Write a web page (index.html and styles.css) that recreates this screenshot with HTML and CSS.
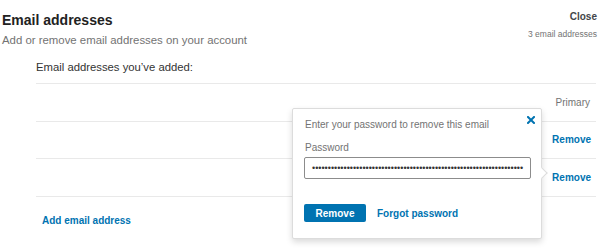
FILE: index.html
```html
<!DOCTYPE html>
<html>
<head>
<meta charset="utf-8">
<link rel="stylesheet" href="styles.css">
</head>
<body>
<section class="panel">
  <header class="head">
    <div class="titles">
      <h2 class="title">Email addresses</h2>
      <p class="subtitle">Add or remove email addresses on your account</p>
    </div>
    <div class="meta">
      <a class="close-link">Close</a>
      <span class="count">3 email addresses</span>
    </div>
  </header>
  <div class="content">
    <p class="label">Email addresses you’ve added:</p>
    <ul class="list">
      <li class="row"><span class="primary">Primary</span></li>
      <li class="row"><a class="remove">Remove</a></li>
      <li class="row"><a class="remove">Remove</a></li>
    </ul>
    <div class="add-wrap"><a class="add">Add email address</a></div>
  </div>

  <div class="popover">
    <button class="popover-close" aria-label="Close">
      <svg width="8" height="8" viewBox="0 0 8 8"><path d="M1 1L7 7M7 1L1 7" stroke="#0073b1" stroke-width="2" stroke-linecap="square"/></svg>
    </button>
    <p class="pop-text">Enter your password to remove this email</p>
    <label class="pop-label">Password</label>
    <div class="pw-field"><span class="dots">•••••••••••••••••••••••••••••••••••••••••••••••••••••••••••••••••••</span></div>
    <div class="pop-actions">
      <button class="btn-primary">Remove</button>
      <a class="forgot">Forgot password</a>
    </div>
    <span class="pointer"></span>
  </div>
</section>
</body>
</html>
```

FILE: styles.css
```css
* { box-sizing: border-box; }
html, body { margin: 0; padding: 0; background: #fff; }
body {
  font-family: "Liberation Sans", Arial, sans-serif;
  color: #333;
  width: 600px;
  height: 250px;
  overflow: hidden;
}
.panel {
  position: relative;
  padding: 11px 3px 0 2px;
  border-bottom: 1px solid #e9e9e9;
}
.head {
  display: flex;
  justify-content: space-between;
  align-items: flex-start;
}
.title {
  margin: 0;
  font-size: 14px;
  line-height: 18px;
  font-weight: bold;
  color: #222;
}
.subtitle {
  margin: 3px 0 0;
  font-size: 11.4px;
  line-height: 16px;
  color: #737373;
}
.meta {
  display: flex;
  flex-direction: column;
  align-items: flex-end;
}
.close-link {
  font-size: 10px;
  line-height: 12px;
  font-weight: bold;
  color: #434649;
}
.count {
  margin-top: 5px;
  font-size: 8.5px;
  line-height: 12px;
  color: #737373;
}
.content {
  margin-left: 34px;
  margin-right: 1px;
}
.label {
  margin: 11px 0 8px;
  font-size: 11.3px;
  line-height: 16px;
  color: #333;
}
.list {
  list-style: none;
  margin: 0;
  padding: 0;
  border-bottom: 1px solid #e9e9e9;
}
.row {
  height: 37.67px;
  border-top: 1px solid #e9e9e9;
  display: flex;
  align-items: center;
  justify-content: flex-end;
  padding-right: 5px;
}
.primary {
  font-size: 10px;
  color: #737373;
  margin-right: 1px;
}
.remove, .add, .forgot {
  font-size: 10px;
  font-weight: bold;
  color: #0073b1;
}
.add-wrap {
  padding: 14px 0 21px 6px;
  line-height: 16px;
}
.popover {
  position: absolute;
  left: 292px;
  top: 108px;
  width: 250px;
  height: 131px;
  background: #fff;
  border: 1px solid #dcdcdc;
  border-radius: 2px;
  box-shadow: 0 3px 6px rgba(0,0,0,0.15);
  padding: 9px 10px 0 12px;
}
.popover-close {
  position: absolute;
  top: 6px;
  right: 5px;
  border: 0;
  background: none;
  padding: 0;
  width: 10px;
  height: 10px;
  display: flex;
  align-items: center;
  justify-content: center;
}
.pop-text {
  margin: 0;
  font-size: 10px;
  line-height: 14px;
  color: #737373;
}
.pop-label {
  display: block;
  margin-top: 9px;
  font-size: 10px;
  line-height: 14px;
  color: #737373;
}
.pw-field {
  margin-top: 2px;
  margin-left: -1px;
  width: 227px;
  height: 22px;
  border: 1px solid #8c8c8c;
  border-radius: 2px;
  padding: 0 0 0 7px;
  display: flex;
  align-items: center;
  overflow: hidden;
}
.dots {
  font-size: 9px;
  line-height: 9px;
  color: #333;
  white-space: nowrap;
  position: relative;
  top: 0;
}
.pop-actions {
  margin-top: 25px;
  margin-left: -1px;
  display: flex;
  align-items: center;
  gap: 11px;
}
.btn-primary {
  height: 18px;
  width: 62px;
  border: 0;
  border-radius: 2px;
  background: #0073b1;
  color: #fff;
  font-family: "Liberation Sans", Arial, sans-serif;
  font-size: 10px;
  font-weight: bold;
  padding: 0;
}
.pointer {
  position: absolute;
  right: -5px;
  top: 60px;
  width: 8px;
  height: 8px;
  background: #fff;
  border-top: 1px solid #dcdcdc;
  border-right: 1px solid #dcdcdc;
  transform: rotate(45deg);
}
```
